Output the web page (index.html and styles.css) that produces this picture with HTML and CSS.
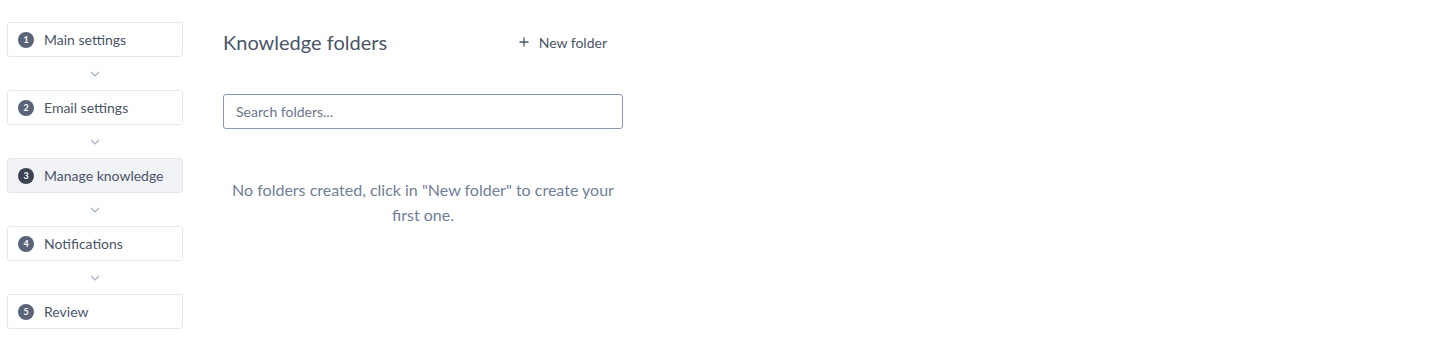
FILE: index.html
```html
<!DOCTYPE html>
<html>
<head>
<meta charset="utf-8">
<link rel="stylesheet" href="styles.css">
</head>
<body>
<div class="page">
  <nav class="steps">
    <div class="step"><span class="num">1</span><span class="label">Main settings</span></div>
    <div class="sep"><svg width="10" height="6" viewBox="0 0 10 6"><path d="M1 1l4 4 4-4" fill="none" stroke="#a3b0c6" stroke-width="1.2"/></svg></div>
    <div class="step"><span class="num">2</span><span class="label">Email settings</span></div>
    <div class="sep"><svg width="10" height="6" viewBox="0 0 10 6"><path d="M1 1l4 4 4-4" fill="none" stroke="#a3b0c6" stroke-width="1.2"/></svg></div>
    <div class="step active"><span class="num">3</span><span class="label">Manage knowledge</span></div>
    <div class="sep"><svg width="10" height="6" viewBox="0 0 10 6"><path d="M1 1l4 4 4-4" fill="none" stroke="#a3b0c6" stroke-width="1.2"/></svg></div>
    <div class="step"><span class="num">4</span><span class="label">Notifications</span></div>
    <div class="sep"><svg width="10" height="6" viewBox="0 0 10 6"><path d="M1 1l4 4 4-4" fill="none" stroke="#a3b0c6" stroke-width="1.2"/></svg></div>
    <div class="step"><span class="num">5</span><span class="label">Review</span></div>
  </nav>
  <main class="main">
    <div class="header">
      <h1 class="title">Knowledge folders</h1>
      <button class="new-btn"><svg width="10" height="10" viewBox="0 0 10 10"><path d="M5 0.5v9M0.5 5h9" stroke="#4a5568" stroke-width="1.3"/></svg><span>New folder</span></button>
    </div>
    <input class="search" type="text" placeholder="Search folders...">
    <p class="empty">No folders created, click in "New folder" to create your first one.</p>
  </main>
</div>
</body>
</html>
```

FILE: styles.css
```css
* { box-sizing: border-box; }
html, body { margin: 0; padding: 0; background: #fff; }
body { font-family: Lato, "Open Sans", sans-serif; color: #4a5568; }
.page { display: flex; align-items: flex-start; padding: 22px 0 0 7px; gap: 40px; }
.steps { width: 176px; display: flex; flex-direction: column; }
.step { height: 35px; border: 1px solid #e2e8f0; border-radius: 3px; display: flex; align-items: center; padding-left: 10px; gap: 10px; font-size: 14px; color: #4a5568; }
.step.active { background: #f1f3f6; }
.num { width: 16px; height: 16px; border-radius: 50%; background: #5a6478; color: #fff; font-size: 9px; font-weight: 700; display: flex; align-items: center; justify-content: center; }
.step.active .num { background: #3a4254; }
.sep { height: 33px; display: flex; align-items: center; justify-content: center; padding-top: 1px; }
.sep svg { display: block; }
.main { width: 400px; display: flex; flex-direction: column; }
.header { display: flex; align-items: center; justify-content: space-between; height: 40px; margin-bottom: 2px; }
.title { margin: 0; font-size: 20px; font-weight: 400; color: #4a5568; }
.new-btn { background: none; border: none; display: flex; align-items: center; gap: 10px; font-family: inherit; font-size: 14px; color: #4a5568; padding: 0 16px 0 0; cursor: pointer; }
.new-btn svg { display: block; }
.search { margin-top: 30px; height: 35px; width: 400px; border: 1px solid #8a98ae; border-radius: 3px; padding: 0 12px; font-family: inherit; font-size: 14px; color: #4a5568; outline: none; }
.search::placeholder { color: #6b7689; }
.empty { margin: 48px 0 0; text-align: center; font-size: 16px; line-height: 25px; color: #718096; }
```
